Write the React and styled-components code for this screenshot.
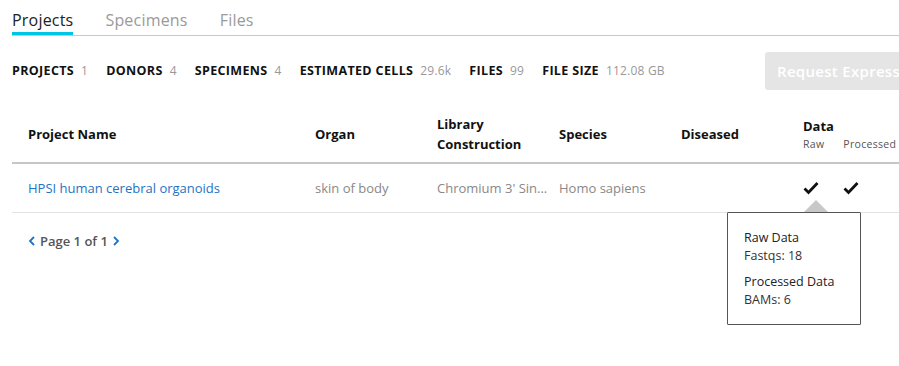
import React from "react";
import styled, { createGlobalStyle } from "styled-components";

const Global = createGlobalStyle`
  html, body { margin: 0; padding: 0; background: #fff; }
  body { font-family: "Open Sans", "Liberation Sans", sans-serif; color: #222; }
  * { box-sizing: border-box; }
`;

const Page = styled.div`
  width: 899px;
  height: 366px;
  padding: 0 0 0 12px;
  overflow: hidden;
`;

const Tabs = styled.div`
  display: flex;
  gap: 32px;
  height: 36px;
  border-bottom: 1px solid #c8c8c8;
  padding-top: 8px;
`;

const Tab = styled.div`
  font-size: 16px;
  line-height: 24px;
  color: ${(p) => (p.$active ? "#222" : "#9a9a9a")};
  border-bottom: 3px solid ${(p) => (p.$active ? "#00c4e6" : "transparent")};
  height: 27px;
  letter-spacing: 0.2px;
`;

const StatsBar = styled.div`
  display: flex;
  align-items: center;
  height: 38px;
  margin-top: 16px;
  justify-content: space-between;
`;

const Stats = styled.div`
  display: flex;
  gap: 18px;
  align-items: center;
  padding-bottom: 2px;
`;

const Stat = styled.div`
  font-size: 12.5px;
  font-weight: 700;
  color: #111;
  display: flex;
  gap: 7px;
  align-items: baseline;
  letter-spacing: 0.35px;
`;

const StatValue = styled.span`
  font-weight: 400;
  color: #999;
  font-size: 12px;
  letter-spacing: 0.2px;
`;

const Button = styled.div`
  height: 38px;
  width: 150px;
  background: #e5e5e5;
  border-radius: 3px;
  color: #fff;
  font-size: 15px;
  font-weight: 600;
  display: flex;
  align-items: center;
  padding-left: 12px;
  white-space: nowrap;
  overflow: hidden;
  margin-right: -16px;
  letter-spacing: 0.3px;
`;

const Table = styled.div`
  margin-top: 20px;
`;

const cols = "287px 122px 122px 122px 122px 1fr";

const HeadRow = styled.div`
  display: grid;
  grid-template-columns: ${cols};
  padding-left: 16px;
  padding-bottom: 5px;
  height: 54px;
  align-items: center;
  border-bottom: 2px solid #c6c6c6;
`;

const HeadCell = styled.div`
  font-size: 13px;
  font-weight: 700;
  color: #111;
  line-height: 20px;
`;

const SubHeads = styled.div`
  display: flex;
  gap: 19px;
  font-size: 10.5px;
  font-weight: 400;
  color: #555;
  line-height: 16px;
  letter-spacing: 0.3px;
`;

const BodyRow = styled.div`
  display: grid;
  grid-template-columns: ${cols};
  padding-left: 16px;
  height: 49px;
  align-items: center;
  border-bottom: 1px solid #e3e3e3;
`;

const Cell = styled.div`
  font-size: 13px;
  color: ${(p) => (p.$link ? "#1f73c4" : "#888")};
  white-space: nowrap;
  padding-bottom: 1px;
`;

const Checks = styled.div`
  display: flex;
  gap: 24px;
  position: relative;
`;

const Check = styled.span`
  width: 16px;
  height: 16px;
  display: flex;
  align-items: center;
  justify-content: center;
`;

const Tooltip = styled.div`
  position: absolute;
  left: -76px;
  top: 32px;
  width: 134px;
  height: 113px;
  background: #fff;
  border: 1px solid #555;
  border-radius: 1px;
  padding: 16px 16px 0 16px;
  z-index: 2;
  &::before {
    content: "";
    position: absolute;
    top: -13px;
    left: 76px;
    border-left: 12px solid transparent;
    border-right: 12px solid transparent;
    border-bottom: 12px solid #c8c8c8;
  }
`;

const TipTitle = styled.div`
  font-size: 12.5px;
  color: #222;
  line-height: 18px;
`;

const TipValue = styled.div`
  font-size: 12.5px;
  color: #333;
  line-height: 18px;
  margin-bottom: ${(p) => (p.$gap ? "8px" : "0")};
`;

const Pager = styled.div`
  display: flex;
  align-items: center;
  gap: 4px;
  padding-left: 16px;
  margin-top: 19px;
  font-size: 13px;
  font-weight: 600;
  color: #555;
`;

const Chevron = ({ dir }) => (
  <svg width="8" height="10" viewBox="0 0 8 10">
    <path
      d={dir === "left" ? "M6 1 L2 5 L6 9" : "M2 1 L6 5 L2 9"}
      fill="none"
      stroke="#1f73c4"
      strokeWidth="1.8"
    />
  </svg>
);

const CheckIcon = () => (
  <svg width="16" height="14" viewBox="0 0 16 14">
    <path d="M1.5 7.5 L5.5 11.5 L14.5 2" fill="none" stroke="#111" strokeWidth="2.8" />
  </svg>
);

export default function App() {
  return (
    <Page>
      <Global />
      <Tabs>
        <Tab $active>Projects</Tab>
        <Tab>Specimens</Tab>
        <Tab>Files</Tab>
      </Tabs>
      <StatsBar>
        <Stats>
          <Stat>PROJECTS <StatValue>1</StatValue></Stat>
          <Stat>DONORS <StatValue>4</StatValue></Stat>
          <Stat>SPECIMENS <StatValue>4</StatValue></Stat>
          <Stat>ESTIMATED CELLS <StatValue>29.6k</StatValue></Stat>
          <Stat>FILES <StatValue>99</StatValue></Stat>
          <Stat>FILE SIZE <StatValue>112.08 GB</StatValue></Stat>
        </Stats>
        <Button>Request Express Matrices</Button>
      </StatsBar>
      <Table>
        <HeadRow>
          <HeadCell>Project Name</HeadCell>
          <HeadCell>Organ</HeadCell>
          <HeadCell>Library<br />Construction</HeadCell>
          <HeadCell>Species</HeadCell>
          <HeadCell>Diseased</HeadCell>
          <HeadCell>
            Data
            <SubHeads><span>Raw</span><span>Processed</span></SubHeads>
          </HeadCell>
        </HeadRow>
        <BodyRow>
          <Cell $link>HPSI human cerebral organoids</Cell>
          <Cell>skin of body</Cell>
          <Cell>Chromium 3' Sin...</Cell>
          <Cell>Homo sapiens</Cell>
          <Cell></Cell>
          <Checks>
            <Check><CheckIcon /></Check>
            <Check><CheckIcon /></Check>
            <Tooltip>
              <TipTitle>Raw Data</TipTitle>
              <TipValue $gap>Fastqs: 18</TipValue>
              <TipTitle>Processed Data</TipTitle>
              <TipValue>BAMs: 6</TipValue>
            </Tooltip>
          </Checks>
        </BodyRow>
      </Table>
      <Pager>
        <Chevron dir="left" />
        <span>Page 1 of 1</span>
        <Chevron dir="right" />
      </Pager>
    </Page>
  );
}
